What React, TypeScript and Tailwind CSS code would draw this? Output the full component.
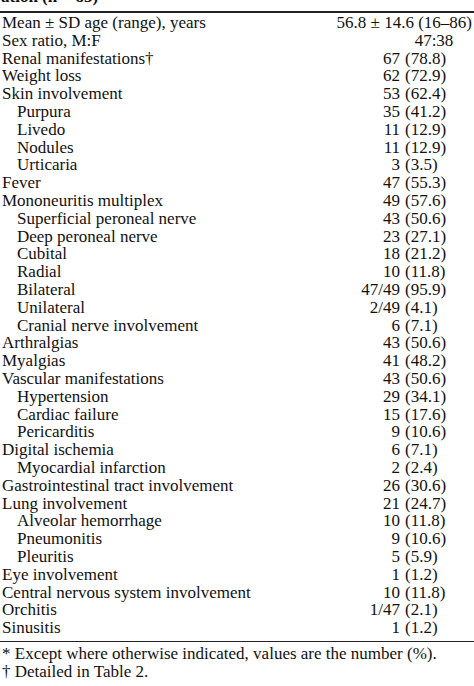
import React from 'react';

interface Row {
  label: string;
  count?: string;
  pct?: string;
  whole?: string;
  sub?: boolean;
}

const rows: Row[] = [
  { label: 'Mean ± SD age (range), years', whole: '56.8 ± 14.6 (16–86)' },
  { label: 'Sex ratio, M:F', whole: '47:38' },
  { label: 'Renal manifestations†', count: '67', pct: '(78.8)' },
  { label: 'Weight loss', count: '62', pct: '(72.9)' },
  { label: 'Skin involvement', count: '53', pct: '(62.4)' },
  { label: 'Purpura', count: '35', pct: '(41.2)', sub: true },
  { label: 'Livedo', count: '11', pct: '(12.9)', sub: true },
  { label: 'Nodules', count: '11', pct: '(12.9)', sub: true },
  { label: 'Urticaria', count: '3', pct: '(3.5)', sub: true },
  { label: 'Fever', count: '47', pct: '(55.3)' },
  { label: 'Mononeuritis multiplex', count: '49', pct: '(57.6)' },
  { label: 'Superficial peroneal nerve', count: '43', pct: '(50.6)', sub: true },
  { label: 'Deep peroneal nerve', count: '23', pct: '(27.1)', sub: true },
  { label: 'Cubital', count: '18', pct: '(21.2)', sub: true },
  { label: 'Radial', count: '10', pct: '(11.8)', sub: true },
  { label: 'Bilateral', count: '47/49', pct: '(95.9)', sub: true },
  { label: 'Unilateral', count: '2/49', pct: '(4.1)', sub: true },
  { label: 'Cranial nerve involvement', count: '6', pct: '(7.1)', sub: true },
  { label: 'Arthralgias', count: '43', pct: '(50.6)' },
  { label: 'Myalgias', count: '41', pct: '(48.2)' },
  { label: 'Vascular manifestations', count: '43', pct: '(50.6)' },
  { label: 'Hypertension', count: '29', pct: '(34.1)', sub: true },
  { label: 'Cardiac failure', count: '15', pct: '(17.6)', sub: true },
  { label: 'Pericarditis', count: '9', pct: '(10.6)', sub: true },
  { label: 'Digital ischemia', count: '6', pct: '(7.1)' },
  { label: 'Myocardial infarction', count: '2', pct: '(2.4)', sub: true },
  { label: 'Gastrointestinal tract involvement', count: '26', pct: '(30.6)' },
  { label: 'Lung involvement', count: '21', pct: '(24.7)' },
  { label: 'Alveolar hemorrhage', count: '10', pct: '(11.8)', sub: true },
  { label: 'Pneumonitis', count: '9', pct: '(10.6)', sub: true },
  { label: 'Pleuritis', count: '5', pct: '(5.9)', sub: true },
  { label: 'Eye involvement', count: '1', pct: '(1.2)' },
  { label: 'Central nervous system involvement', count: '10', pct: '(11.8)' },
  { label: 'Orchitis', count: '1/47', pct: '(2.1)' },
  { label: 'Sinusitis', count: '1', pct: '(1.2)' },
];

export default function App() {
  return (
    <div className="w-[474px] h-[686px] overflow-hidden bg-white text-[#111] font-['Liberation_Serif',serif] text-[17px]">
      <div className="h-[11px] overflow-hidden">
        <div className="mt-[-12px] pl-[1px] font-bold leading-[18px]">ation (n = 85)</div>
      </div>
      <div className="h-[2px] bg-[#222]" />
      <div className="pt-[1px]">
        {rows.map((r) => (
          <div key={r.label} className="flex items-center h-[17.8px] leading-[17.8px] whitespace-nowrap">
            <div className={r.sub ? 'flex-1 pl-[17px]' : 'flex-1 pl-[2px]'}>{r.label}</div>
            {r.whole ? (
              <div className={r.label.startsWith('Mean') ? 'pr-[2px]' : 'w-[80px] text-center'}>{r.whole}</div>
            ) : (
              <div className="flex">
                <div className="w-[80px] text-right">{r.count}</div>
                <div className="w-[74px] pl-[5px]">{r.pct}</div>
              </div>
            )}
          </div>
        ))}
      </div>
      <div className="mt-[4px] h-[1.5px] bg-[#222]" />
      <div className="pt-[3px] pl-[2px] leading-[18px]">
        <div>* Except where otherwise indicated, values are the number (%).</div>
        <div>† Detailed in Table 2.</div>
      </div>
    </div>
  );
}
